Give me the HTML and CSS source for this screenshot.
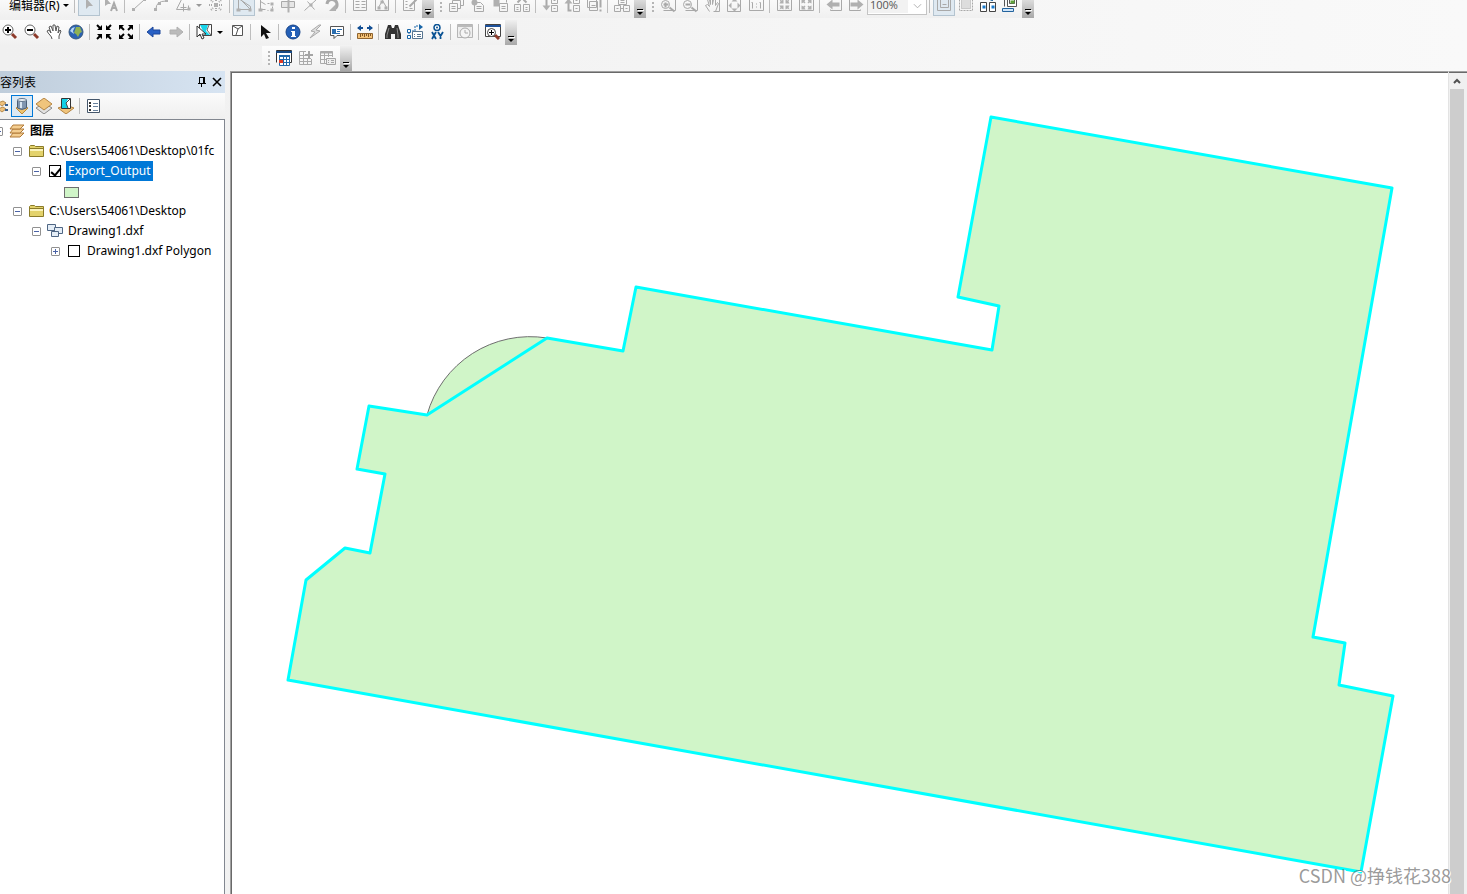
FILE: index.html
```html
<!DOCTYPE html>
<html lang="zh-CN">
<head>
    <meta charset="UTF-8">
    <meta name="viewport" content="width=device-width, initial-scale=1.0">
    <title>ArcMap</title>
    <link rel="stylesheet" href="styles.css">
</head>
<body>
    <header class="toolbars">
        <!-- Editor, geodatabase and layout bars -->
        <div class="toolbar-row row-editor">
            <div class="toolbar toolbar-off">
                <button class="menu-btn">编辑器(R)<i class="caret"></i></button>
                <span class="sep"></span>
                <button class="btn active" title="Edit"><svg viewBox="0 0 16 16"><path class="f" d="M5 1v11l3-3h4z"/></svg></button>
                <button class="btn" title="Annotation"><svg viewBox="0 0 16 16"><path class="f" d="M2 0v9l3-2h3z"/><path d="M8 14l3-8 3 8M9 11h4" stroke-width="2"/></svg></button>
                <span class="sep"></span>
                <button class="btn" title="Straight"><svg viewBox="0 0 16 16"><path d="M3 12L13 3"/><path class="f" d="M1 11h3v3H1zM12 1h3v3h-3z"/></svg></button>
                <button class="btn" title="Arc"><svg viewBox="0 0 16 16"><path d="M3 12Q3 4 13 4"/><path class="f" d="M1 11h3v3H1zM5 5h3v3H5zM12 2h3v3h-3z"/></svg></button>
                <button class="btn" title="Trace"><svg viewBox="-.5 -.5 16 16"><path d="M1 12L7 0M1 12h12V8M8 6v8M5 10h6"/><path class="f" d="M12 10h3v3h-3z"/></svg></button>
                <i class="caret"></i>
                <button class="btn" title="Point"><svg viewBox="0 0 16 16"><path class="f" d="M6 6h4v4H6z"/><path d="M1 8h4M11 8h4M8 1v4M8 11v4M3 3l2 2M13 3l-2 2M3 13l2-2M13 13l-2-2" stroke-width="2" stroke-dasharray="1 1"/></svg></button>
                <span class="sep"></span>
                <button class="btn active" title="Edit Vertices"><svg viewBox="-.5 -.5 16 16"><path d="M2 0v12h12zM2 1l12 8v4"/><path class="f" d="M0 11h4v3H0zM12 11h3v3h-3z"/></svg></button>
                <button class="btn" title="Reshape"><svg viewBox="-.5 -.5 16 16"><path d="M2 0v12h5M2 4l5 3"/><path d="M9 6h5v7H9" stroke-dasharray="2 2"/><path class="f" d="M0 11h4v3H0zM12 5h3v3h-3zM12 11h3v3h-3z"/></svg></button>
                <button class="btn" title="Cut"><svg viewBox="-.5 -.5 16 16"><path d="M1 4h13v6H1z" fill="#e6e6e6"/><path class="f" d="M7 0h2v15H7z"/></svg></button>
                <button class="btn" title="Split"><svg viewBox="-.5 -.5 16 16"><path d="M2 13L14 2M5 4l7 8"/><path class="f" d="M7 6h3v3H7z"/></svg></button>
                <button class="btn" title="Rotate"><svg viewBox="0 0 16 16"><path d="M3 7a5 5 0 1 1 7 5" stroke-width="3"/><path class="f" d="M12 7v7H5z"/></svg></button>
                <span class="sep"></span>
                <button class="btn" title="Attributes"><svg viewBox="-.5 -.5 16 16"><path d="M1 0h13v13H1zM3 4h4M3 7h4M3 10h4M9 4h4M9 7h4M9 10h4"/></svg></button>
                <button class="btn" title="Sketch"><svg viewBox="-.5 -.5 16 16"><path d="M1 0h13v13H1zM4 10l4-7 4 7"/><path class="f" d="M3 9h3v3H3zM6 3h3v3H6zM10 9h3v3h-3z"/></svg></button>
                <span class="sep"></span>
                <button class="btn" title="Create Features"><svg viewBox="-.5 -.5 16 16"><path d="M1 0h11v13H1zM3 4h2M3 7h2M3 10h2M7 11h3"/><path d="M7 9l7-7" stroke-width="2"/></svg></button>
                <button class="overflow" title="Toolbar Options"></button>
            </div>
            <div class="toolbar toolbar-off">
                <span class="grip"></span>
                <button class="btn" title="Copy"><svg viewBox="-.5 -.5 16 16"><path d="M1 6h8v8H1zM4 6V3h8v8H9M7 3V0h8v8h-3M3 9h4M3 11h4"/></svg></button>
                <button class="btn" title="New"><svg viewBox="-.5 -.5 16 16"><path d="M4 5h6l3 3v6H4zM6 9h5M6 11h5"/><circle class="f" cx="4" cy="5" r="3"/></svg></button>
                <button class="btn" title="Export"><svg viewBox="-.5 -.5 16 16"><path d="M7 6h8v8H7zM9 9h4M9 11h4M9 1h5v4"/><path class="f" d="M1 2h6v7H1z"/></svg></button>
                <button class="btn" title="Compare"><svg viewBox="-.5 -.5 16 16"><path d="M0 7h6v7H0zM9 7h6v7H9zM2 10h2M11 10h2M2 12h2M11 12h2"/><path d="M3 5l3-3M12 5L9 2" stroke-width="2"/></svg></button>
                <span class="sep"></span>
                <button class="btn" title="Check Out"><svg viewBox="-.5 -.5 16 16"><path d="M9 1h6v5H9zM9 8h6v6H9zM11 11h2M11 3h2"/><path d="M3 1h4M4 1v9" stroke-width="2"/><path class="f" d="M0 8h8l-4 5z"/></svg></button>
                <button class="btn" title="Check In"><svg viewBox="-.5 -.5 16 16"><path d="M9 1h6v5H9zM9 8h6v6H9zM11 11h2M11 3h2"/><path d="M4 5v8h3" stroke-width="2"/><path class="f" d="M0 6h8L4 1z"/></svg></button>
                <button class="btn" title="Conflicts"><svg viewBox="-.5 -.5 16 16"><path d="M1 1h9v9H1zM3 4h8v9H3zM5 8h4M5 10h4"/><path d="M14 2v8M14 12v2" stroke-width="2"/></svg></button>
                <span class="sep"></span>
                <button class="btn" title="Replicas"><svg viewBox="-.5 -.5 16 16"><path d="M4 0h8v7H4zM0 8h6v6H0zM9 8h6v6H9zM6 3h4M6 5h4M2 11h2M11 11h2M6 11h3"/></svg></button>
                <button class="overflow" title="Toolbar Options"></button>
            </div>
            <div class="toolbar toolbar-off">
                <span class="grip"></span>
                <button class="btn" title="Layout Zoom In"><svg viewBox="-.5 -.5 16 16"><path d="M3 13h12V0H9"/><circle cx="5" cy="7" r="4"/><path d="M3 7h5M5 5v5M9 10l5 4" stroke-width="2"/></svg></button>
                <button class="btn" title="Layout Zoom Out"><svg viewBox="-.5 -.5 16 16"><path d="M3 13h12V0H9"/><circle cx="5" cy="7" r="4"/><path d="M3 7h5M9 10l5 4" stroke-width="2"/></svg></button>
                <button class="btn" title="Layout Pan"><svg viewBox="-.5 -.5 16 16"><path d="M5 14L1 8l2-1 2 2-2-7h2l1 5V1h2v6l1-5h2v6l2-3 1 1-3 8M9 14h6V1"/></svg></button>
                <button class="btn" title="Whole Page"><svg viewBox="-.5 -.5 16 16"><path d="M1 0h13v14H1z"/><path class="f" d="M8 1l3 3H5zM8 14l3-3H5zM2 8l3-3v6zM14 8l-3-3v6z"/></svg></button>
                <button class="btn" title="Actual Size"><svg viewBox="-.5 -.5 16 16"><path d="M1 0h14v13H1zM3 5h1v6M11 5h1v6M8 6v1M8 9v1"/></svg></button>
                <span class="sep"></span>
                <button class="btn" title="Fixed Zoom In"><svg viewBox="-.5 -.5 16 16"><path d="M1 0h14v13H1z"/><path class="f" d="M3 2l2 1 2-1v4H3l1-2zM13 2l-2 1-2-1v4h4l-1-2zM3 12l2-1 2 1V8H3l1 2zM13 12l-2-1-2 1V8h4l-1 2z"/></svg></button>
                <button class="btn" title="Fixed Zoom Out"><svg viewBox="-.5 -.5 16 16"><path d="M1 0h14v13H1z"/><path class="f" d="M3 2h4L6 4l1 1-1 1-1-1-2 1zM13 2H9l1 2-1 1 1 1 1-1 2 1zM3 12h4l-1-2 1-1-1-1-1 1-2-1zM13 12H9l1-2-1-1 1-1 1 1 2-1z"/></svg></button>
                <span class="sep"></span>
                <button class="btn" title="Back"><svg viewBox="-.5 -.5 16 16"><path d="M4 1V0h11v13H4v-1"/><path class="f" d="M0 7l6-5v3h7v4H6v3z"/></svg></button>
                <button class="btn" title="Forward"><svg viewBox="-.5 -.5 16 16"><path d="M12 1V0H1v13h11v-1"/><path class="f" d="M15 7L9 2v3H2v4h7v3z"/></svg></button>
                <label class="zoom-box"><select aria-label="Zoom"><option>100%</option></select><svg viewBox="0 0 10 6"><path d="M1 1l4 4 4-4"/></svg></label>
                <span class="sep"></span>
                <button class="btn active" title="Draft Mode"><svg viewBox="-.5 -.5 16 16"><path d="M1 0h13v13H1zM4 2h8v8H4zM6 7h4"/></svg></button>
                <button class="btn" title="Focus Data Frame"><svg viewBox="-.5 -.5 16 16"><path d="M1 0h13v13H1z" stroke-dasharray="2 1"/><path d="M3 2h9v9H3z" fill="#ddd" stroke-dasharray="1 1"/></svg></button>
                <button class="btn color" title="Change Layout"><svg viewBox="-.5 -.5 16 16"><path d="M0 5h6v9H0zM9 5h6v9H9z" fill="#fff" stroke="#444"/><path d="M2 8h3v3H2zM11 8h3v3h-3z" fill="#1979ca" stroke="none"/><path d="M4 1h8v2l-3-1H6z" fill="#004b8d" stroke="#004b8d"/></svg></button>
                <button class="btn color" title="Data Driven Pages"><svg viewBox="-.5 -.5 16 16"><path d="M5 0v9h9V0M7 2h5v4H7z" fill="#fff" stroke="#555"/><path d="M8 3h4v3H8z" fill="#61a43b" stroke="none"/><path d="M0 11h11v3H0z" fill="#cfe4f8" stroke="#23639d"/><path d="M2 9V2" stroke="#555"/></svg></button>
                <button class="overflow" title="Toolbar Options"></button>
            </div>
        </div>

        <!-- Tools bar -->
        <div class="toolbar-row row-tools">
            <div class="toolbar">
                <button class="btn" title="Zoom In"><svg viewBox="0 0 16 16"><path d="M10 10l4 4" stroke="#8d3b2b" stroke-width="3"/><circle cx="6" cy="6" r="5" fill="#fff" stroke="#666"/><path d="M3 6h6M6 3v6" stroke="#000" stroke-width="2"/></svg></button>
                <button class="btn" title="Zoom Out"><svg viewBox="0 0 16 16"><path d="M10 10l4 4" stroke="#8d3b2b" stroke-width="3"/><circle cx="6" cy="6" r="5" fill="#fff" stroke="#666"/><path d="M3 6h6" stroke="#000" stroke-width="2"/></svg></button>
                <button class="btn" title="Pan"><svg viewBox="0 0 16 16"><path d="M6 15c0-3-4-5-5-8l2-1 2 3-2-6 2-1 2 5V1h2l1 6 1-5 2 1-1 6 2-3 1 1-2 5v3" fill="#fff" stroke="#555"/></svg></button>
                <button class="btn" title="Full Extent"><svg viewBox="0 0 16 16"><circle cx="8" cy="8" r="7" fill="#2a62b4" stroke="#39597e"/><path d="M8 3l4 0 2 5-2 1-2 4-2-3-2-1 1-3z" fill="#8fb152"/><path d="M2 7l2-3 3-1-2 4 1 3z" fill="#b5d5f3"/></svg></button>
                <span class="sep"></span>
                <button class="btn" title="Fixed Zoom In"><svg viewBox="0 0 16 16"><path d="M1 1l4 4M15 1l-4 4M1 15l4-4M15 15l-4-4" stroke="#000" stroke-width="2"/><path d="M6 1v5H1zM10 1v5h5zM6 15v-5H1zM10 15v-5h5z"/></svg></button>
                <button class="btn" title="Fixed Zoom Out"><svg viewBox="0 0 16 16"><path d="M2 2l4 4M14 2l-4 4M2 14l4-4M14 14l-4-4" stroke="#000" stroke-width="2"/><path d="M1 1h5L1 6zM15 1h-5l5 5zM1 15h5l-5-5zM15 15h-5l5-5z"/></svg></button>
                <span class="sep"></span>
                <button class="btn" title="Previous Extent"><svg viewBox="0 0 16 16"><path d="M1 8l6-5v3h7v4H7v3z" fill="#2860c5" stroke="#1d479a"/></svg></button>
                <button class="btn" title="Next Extent"><svg viewBox="0 0 16 16"><path d="M15 8L9 3v3H2v4h7v3z" fill="#bbb" stroke="#b0b0b0"/></svg></button>
                <span class="sep"></span>
                <button class="btn" title="Select Features"><svg viewBox="0 0 16 16"><path d="M3.500.500h12v11h-12z" fill="#fff" stroke="#444"/><path d="M4 1h8l-2 6 4 4H9z" fill="#17d4ea"/><path d="M13 1l-2 5 4 5" stroke="#666"/><path d="M1 2v11l3-3 2 5 2-1-2-4h4z" fill="#fff" stroke="#333"/></svg></button>
                <i class="caret"></i>
                <button class="btn" title="Clear Selection"><svg viewBox="0 0 16 16"><path d="M3.500 1.500h10v10h-10zM4 2l5 3 4-3M9 5l-2 6" fill="#fff" stroke="#555"/></svg></button>
                <span class="sep"></span>
                <button class="btn" title="Select Elements"><svg viewBox="0 0 16 16"><path d="M4 1v12l3-3 2 5 3-1-3-5h5z" fill="#111"/></svg></button>
                <span class="sep"></span>
                <button class="btn" title="Identify"><svg viewBox="0 0 16 16"><circle cx="8" cy="8" r="7" fill="#2460b7" stroke="#174489"/><path d="M7 3h3v2H7zM6 7h4v5h1v1H6v-1h1V8H6z" fill="#fff"/></svg></button>
                <button class="btn" title="Hyperlink"><svg viewBox="0 0 16 16"><path d="M12 1L4 7l4 1-5 6 10-7-4-1 5-5z" fill="#ddd" stroke="#aaa"/></svg></button>
                <button class="btn" title="HTML Popup"><svg viewBox="0 0 16 16"><path d="M1.500 2.500h13v9H8l-3 3v-3H1.500z" fill="#fff" stroke="#555"/><path d="M3 5h4v4H3z" fill="#2b6eb0"/><path d="M8 5.500h5M8 7.500h3M3 9.500h8" stroke="#2b6eb0"/></svg></button>
                <span class="sep"></span>
                <button class="btn" title="Measure"><svg viewBox="0 0 16 16"><path d="M1 4h5M10 4h5" stroke="#134f94" stroke-width="2"/><path d="M0 4l4-3v6zM16 4l-4-3v6z" fill="#134f94"/><path d="M.5 9.500h15v5H.5z" fill="#f4c277" stroke="#8f6430"/><path d="M3.500 10v3M5.500 10v2M7.500 10v3M9.500 10v2M11.500 10v3M13.500 10v2" stroke="#805523"/></svg></button>
                <span class="sep"></span>
                <button class="btn" title="Find"><svg viewBox="0 0 16 16"><path d="M3 1h3l1 3h2l1-3h3l3 9v5h-6v-5H6v5H0v-5z" fill="#333"/><path d="M4 4l-2 7v3M12 4l1 7v3" stroke="#888"/></svg></button>
                <button class="btn" title="Find Route"><svg viewBox="0 0 16 16"><path d="M2 13V7h6V2h5" stroke="#1865a7" stroke-dasharray="2 1"/><path d="M.5 11.500h3v3h-3zM.5 5.500h3v3h-3z" fill="#fff" stroke="#1865a7"/><path d="M12 0l4 3-4 3z" fill="#1865a7"/><path d="M5.500 7.500h10v7h-10z" fill="#fff" stroke="#587590"/><path d="M7 10.500h1M10 10.500h4M7 12.500h1M10 12.500h4" stroke="#587590"/></svg></button>
                <button class="btn" title="Go To XY"><svg viewBox="0 0 16 16"><circle cx="8" cy="3.500" r="3" fill="#fff" stroke="#0b5394" stroke-width="1.500"/><circle cx="8" cy="3.500" r="1" fill="#0b5394"/><path d="M3 8l4 7M7 8l-4 7M9 8l2.500 4L14 8M11.500 11v4" stroke="#0b5394" stroke-width="1.800"/></svg></button>
                <span class="sep"></span>
                <button class="btn" title="Time Slider"><svg viewBox="0 0 16 16"><path d="M.5.500h15v13H.5z" fill="#eee" stroke="#b5b5b5"/><path d="M0 2h16" stroke="#bbb" stroke-width="2"/><circle cx="8" cy="9" r="5" fill="#f5f5f5" stroke="#aaa"/><path d="M8 6v3h3" stroke="#aaa"/></svg></button>
                <span class="sep"></span>
                <button class="btn" title="Viewer Window"><svg viewBox="0 0 16 16"><path d="M.5.500h15v12H.5z" fill="#fff" stroke="#444"/><path d="M0 2h16" stroke="#20539c" stroke-width="2"/><path d="M10 11l4 4" stroke="#8d3b2b" stroke-width="3"/><circle cx="6.500" cy="8.500" r="4" fill="#fff" stroke="#444"/><path d="M4 8.500h5M6.500 6v5" stroke="#000"/></svg></button>
                <button class="overflow" title="Toolbar Options"></button>
            </div>
        </div>

        <div class="toolbar-row row-table">
            <div class="toolbar">
                <span class="grip"></span>
                <button class="btn" title="Open Table"><svg viewBox="0 0 16 16"><path d="M.5 12.500V.500h15v12H13" fill="#fff" stroke="#333"/><path d="M0 2h16" stroke="#174a85" stroke-width="2"/><path d="M3.500 5.500h10v10h-10z" fill="#fff" stroke="#2168aa"/><path d="M3 6h11" stroke="#2168aa" stroke-width="2"/><path d="M4 9.500h9M4 12.500h9M7.500 6v9M10.500 6v9" stroke="#2168aa"/><path d="M3 10h4v3H3z" fill="#e23b25"/></svg></button>
                <button class="btn" title="Add Row"><svg viewBox="0 0 16 16"><path d="M8 1.500H1.500v13h12V9M1 5.500h6M1 8.500h12M1 11.500h12M5.500 1v13M9.500 8v6" stroke="#aaa"/><path d="M11 1v8M7 5h8" stroke="#a5a5a5" stroke-width="2"/></svg></button>
                <button class="btn" title="Edit Row"><svg viewBox="0 0 16 16"><path d="M7 13.500H.5v-12h12V7M1 5.500h11M1 9.500h6M4.500 1v12M8.500 1v6" stroke="#aaa"/><path d="M.5 2.500h12" stroke="#aaa" stroke-width="2"/><path d="M6.500 8.500h9v6h-9zM8 10.500h1M11 10.500h3M8 12.500h1M11 12.500h3" fill="#eee" stroke="#a5a5a5"/></svg></button>
                <button class="overflow" title="Toolbar Options"></button>
            </div>
        </div>
    </header>

    <main class="workspace">
        <aside class="toc">
            <div class="toc-title">
                <h2>容列表</h2>
                <button title="Auto Hide"><svg viewBox="0 0 10 10"><path d="M2.500 0v6M3 .500h4M1 6.500h8M4.500 6v4" stroke="#000"/><path d="M6 0h2v6H6z"/></svg></button>
                <button title="Close"><svg viewBox="0 0 10 10"><path d="M1 1l8 8M9 1L1 9" stroke="#000" stroke-width="1.600"/></svg></button>
            </div>
            <div class="toc-tools">
                <button class="btn" title="List By Drawing Order"><svg viewBox="0 0 16 16"><path d="M6 5l5-2 3 2-4 3zM6 11l5-2 3 2-4 3z" fill="#efc17c" stroke="#b58a4d"/><path d="M13 7h3M13 12h3" stroke="#376092" stroke-width="2"/></svg></button>
                <button class="btn active" title="List By Source"><svg viewBox="0 0 16 16"><path d="M2 10l6-3 6 3-6 6z" fill="#efc36f" stroke="#bd8a35"/><path d="M3.500 2v8q4 3 9 0V2z" fill="#8096b0" stroke="#4b5f78"/><path d="M6 3h2v7H6z" fill="#d9e6f2"/><ellipse cx="8" cy="2" rx="4.500" ry="1.500" fill="#edf3f8" stroke="#61758c"/></svg></button>
                <button class="btn" title="List By Visibility"><svg viewBox="0 0 16 16"><path d="M0 10l8-5 8 5-8 6z" fill="#e2e2e2" stroke="#888"/><path d="M0 6l8-6 8 6-8 6z" fill="#f0c47c" stroke="#b48443"/></svg></button>
                <button class="btn" title="List By Selection"><svg viewBox="0 0 16 16"><path d="M0 10l8-3 8 3-8 6z" fill="#f0c47c" stroke="#b48443"/><path d="M3.500.500h9v10h-9z" fill="#fff" stroke="#333"/><path d="M4 1h6l-2 4 2 5H4z" fill="#12cfe5"/><path d="M12 1L8 5l2 5" stroke="#444"/></svg></button>
                <span class="sep"></span>
                <button class="btn" title="Options"><svg viewBox="0 0 16 16"><path d="M1.500 1.500h12v13h-12z" fill="#fff" stroke="#44566b"/><path d="M3 4h2v2H3zM3 7h2v2H3zM3 11h2v2H3z" fill="#333"/><path d="M7 5.500h5M7 8.500h5M7 12.500h5" stroke="#68819d"/></svg></button>
            </div>
            <ul class="tree">
                <li>
                    <div class="node"><span class="expander"></span><svg class="icon" viewBox="0 0 16 16"><g fill="#f4ce91" stroke="#b17a38"><path d="M1 14l3-4h11l-4 4z"/><path d="M1 10l3-4h11l-4 4z"/><path d="M1 6l3-4h11l-4 4z"/></g></svg><span class="label root">图层</span></div>
                    <ul>
                        <li>
                            <div class="node"><span class="expander"></span><svg class="icon" viewBox="0 0 16 16"><path d="M1.500 13.500v-10l1-1h4l1 1h8v10z" fill="#e3d26b" stroke="#8b7b29"/><path d="M2 6h13v2H2z" fill="#fbf4bd"/><path d="M1 5.500h14" stroke="#8b7b29"/></svg><span class="label">C:\Users\54061\Desktop\01fc</span></div>
                            <ul>
                                <li>
                                    <div class="node"><span class="expander"></span><input type="checkbox" id="layer-export" checked><label class="label selected" for="layer-export">Export_Output</label></div>
                                    <div class="node legend"><span class="swatch"></span></div>
                                </li>
                            </ul>
                        </li>
                        <li>
                            <div class="node"><span class="expander"></span><svg class="icon" viewBox="0 0 16 16"><path d="M1.500 13.500v-10l1-1h4l1 1h8v10z" fill="#e3d26b" stroke="#8b7b29"/><path d="M2 6h13v2H2z" fill="#fbf4bd"/><path d="M1 5.500h14" stroke="#8b7b29"/></svg><span class="label">C:\Users\54061\Desktop</span></div>
                            <ul>
                                <li>
                                    <div class="node"><span class="expander"></span><svg class="icon" viewBox="0 0 16 16"><g fill="#e4edf6" stroke="#4f6684"><path d="M.5 1.500h8v6h-8z"/><path d="M7.500 4.500h8v6h-8z"/><path d="M4.500 8.500h7v5h-7z"/></g></svg><span class="label">Drawing1.dxf</span></div>
                                    <ul>
                                        <li>
                                            <div class="node"><span class="expander closed"></span><input type="checkbox" id="layer-polygon"><label class="label" for="layer-polygon">Drawing1.dxf Polygon</label></div>
                                        </li>
                                    </ul>
                                </li>
                            </ul>
                        </li>
                    </ul>
                </li>
            </ul>
        </aside>

        <section class="map">
            <svg class="map-canvas" viewBox="232 73 1216 821" preserveAspectRatio="xMinYMin meet">
                <path class="arc" d="M427 415A107 107 0 0 1 547 338"/>
                <polygon class="parcel" points="991,117 1392,188 1313,637 1345,643 1339,685 1393,696 1361,872 288,680 306,580 345,548 370,553 385,474 357,469 369,406 427,415 547,338 623,351 636,287 992,350 999,306 958,297"/>
            </svg>
        </section>
        <div class="scrollbar">
            <button title="Scroll Up"><svg viewBox="0 0 8 6"><path d="M1 5l3-3 3 3" stroke="#505050" stroke-width="2"/></svg></button>
            <div class="thumb"></div>
        </div>
        <p class="watermark">CSDN @挣钱花388</p>
    </main>
</body>
</html>
```
FILE: styles.css
```css
* {
    box-sizing: border-box;
}
body {
    margin: 0;
    height: 100vh;
    display: flex;
    flex-direction: column;
    overflow: hidden;
    background: linear-gradient(90deg, #f0f0f0, #f9f9f9);
    color: #000;
    font-family: "Noto Sans", "Noto Sans CJK SC", sans-serif;
    font-size: 12px;
}
button {
    margin: 0;
    padding: 0;
    border: 0;
    background: none;
    font: inherit;
    color: inherit;
}
svg {
    display: block;
    flex: none;
}
path[stroke]:not([fill]) {
    fill: none;
}

/* toolbars */
.toolbar-row {
    display: flex;
    height: 25px;
}
.row-editor {
    margin-top: -7px;
}
.row-tools {
    margin-top: 2px;
}
.row-tools .toolbar {
    margin-left: -1px;
}
.row-table {
    margin-top: 1px;
    padding-left: 262px;
}
.toolbar {
    display: flex;
    padding-top: 1px;
    background: linear-gradient(#fdfdfd, #f0f0f0);
}
.btn {
    display: flex;
    align-items: center;
    justify-content: center;
    flex: none;
    width: 22px;
    height: 22px;
}
.btn svg {
    width: 16px;
    height: 16px;
}
.btn.active {
    background: #dfe9f1;
    border: 1px solid #b4c4d0;
}
.toolbar-off svg {
    fill: none;
    stroke: #a9a9a9;
}
.toolbar-off .f {
    fill: #b0b0b0;
    stroke: none;
}
.sep {
    flex: none;
    width: 6px;
    height: 16px;
    margin-top: 3px;
    background: linear-gradient(#bdbdbd, #bdbdbd) 2px 0 / 1px 100% no-repeat;
}
.grip {
    flex: none;
    width: 11px;
    height: 15px;
    margin-top: 4px;
    background: repeating-linear-gradient(#b5b5b5 0 2px, transparent 2px 4px) 6px 0 / 2px 100% no-repeat;
}
.caret {
    flex: none;
    width: 11px;
    height: 22px;
    background: #000;
    clip-path: polygon(2px 10px, 8px 10px, 5px 13px);
}
.toolbar-off > .caret {
    background: #999;
}
.menu-btn {
    display: flex;
    align-items: center;
    justify-content: space-between;
    width: 72px;
    height: 22px;
    padding-left: 9px;
    white-space: nowrap;
}
.overflow {
    position: relative;
    width: 12px;
    height: 25px;
    margin: -1px 0 0 1px;
    background: linear-gradient(#f0f0f0, #a8a8a8);
}
.overflow::before, .overflow::after {
    content: "";
    position: absolute;
    left: 3px;
}
.overflow::before {
    bottom: 8px;
    width: 6px;
    height: 1px;
    background: #000;
    box-shadow: 1px 1px #fff;
}
.overflow::after {
    bottom: 3px;
    border: 3px solid transparent;
    border-top-color: #000;
    border-bottom: 0;
}
.zoom-box {
    position: relative;
    width: 60px;
    height: 21px;
    border: 1px solid #c4c4c4;
    background: #fff;
}
.zoom-box select {
    appearance: none;
    width: 40px;
    height: 18px;
    margin: 0;
    padding: 0 0 0 2px;
    border: 0;
    background: #f2f2f2;
    color: #555;
    font: 11px "Open Sans", sans-serif;
}
.zoom-box svg {
    position: absolute;
    right: 4px;
    top: 8px;
    width: 9px;
    height: 6px;
}

/* table of contents */
.workspace {
    position: relative;
    flex: 1;
    display: flex;
    min-height: 0;
}
.toc {
    display: flex;
    flex-direction: column;
    width: 225px;
    margin-right: 5px;
}
.toc-title {
    display: flex;
    align-items: center;
    gap: 5px;
    height: 22px;
    padding-right: 3px;
    background: linear-gradient(90deg, #bfcddb, #d7e4f2);
}
.toc-title h2 {
    flex: 1;
    margin: 0;
    font-size: 12px;
    font-weight: normal;
}
.toc-title button svg {
    width: 10px;
    height: 10px;
}
.toc-tools {
    display: flex;
    height: 26px;
    margin-left: -11px;
    padding-top: 2px;
    background: linear-gradient(#fbfbfb, #efefef);
}
.toc-tools .active {
    border-color: #0078d7;
    background: #dbe8f3;
}
.tree {
    flex: 1;
    overflow: hidden;
    border: 1px solid #828790;
    border-width: 1px 1px 0 0;
    background: #fff;
}
.tree, .tree ul {
    margin: 0;
    padding: 0;
    list-style: none;
}
.tree ul {
    padding-left: 19px;
}
.tree > li {
    margin: 1px 0 0 -6px;
}
.node {
    display: flex;
    align-items: center;
    height: 20px;
    white-space: nowrap;
}
.expander {
    flex: none;
    width: 9px;
    height: 9px;
    margin-right: 6px;
    border: 1px solid #919191;
    border-radius: 1px;
    background: linear-gradient(#4b63a7, #4b63a7) center / 5px 1px no-repeat #fff;
}
.expander.closed {
    background: linear-gradient(#4b63a7, #4b63a7) center / 5px 1px no-repeat, linear-gradient(#4b63a7, #4b63a7) center / 1px 5px no-repeat #fff;
}
.icon {
    width: 16px;
    height: 16px;
}
.node input {
    appearance: none;
    position: relative;
    flex: none;
    width: 12px;
    height: 12px;
    margin: 0 2px;
    border: 1px solid #000;
    background: #fff;
}
.node input:checked::after {
    content: "";
    position: absolute;
    left: 3px;
    top: 0;
    width: 4px;
    height: 8px;
    border: solid #000;
    border-width: 0 2px 2px 0;
    transform: rotate(40deg);
}
.label {
    height: 20px;
    margin-left: 3px;
    padding: 0 2px;
    line-height: 19px;
}
.root {
    font-weight: bold;
}
.selected {
    background: #0078d7;
    color: #fff;
}
.legend {
    padding: 2px 0 0 32px;
}
.swatch {
    width: 15px;
    height: 11px;
    border: 1px solid #6e6e6e;
    background: #d0f5c8;
}

/* map view */
.map {
    flex: 1;
    min-width: 0;
    padding: 1px 0 0 1px;
    border: 1px solid #a0a0a0;
    border-right-color: #e3e3e3;
    border-bottom: 0;
    background: #fff;
    box-shadow: inset 1px 1px #696969;
}
.map-canvas {
    width: 100%;
    height: 100%;
}
.parcel {
    fill: #d0f5c8;
    stroke: #00ffff;
    stroke-width: 3px;
    stroke-linejoin: round;
}
.arc {
    fill: #d0f5c8;
    stroke: #6e6e6e;
    stroke-width: 1px;
}
.scrollbar {
    display: flex;
    flex-direction: column;
    width: 18px;
    padding: 1px 3px 0 1px;
    border-top: 1px solid #a0a0a0;
    background: #f0f0f0;
    box-shadow: inset 0 1px #696969;
}
.scrollbar button {
    display: flex;
    align-items: center;
    justify-content: center;
    height: 16px;
}
.scrollbar svg {
    width: 8px;
    height: 6px;
}
.thumb {
    flex: 1;
    background: #cdcdcd;
}
.watermark {
    position: absolute;
    right: 16px;
    bottom: 6px;
    margin: 0;
    color: rgba(110, 110, 110, 0.7);
    font-family: "Noto Sans CJK SC", sans-serif;
    font-size: 18px;
    line-height: 26px;
    text-shadow: 1px 1px #fff;
}
```
